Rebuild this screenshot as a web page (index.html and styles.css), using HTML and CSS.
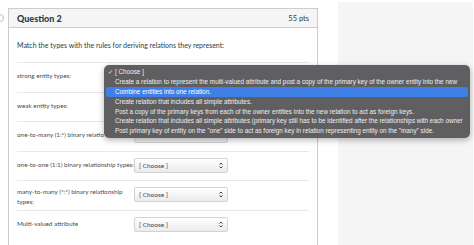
FILE: index.html
```html
<!DOCTYPE html>
<html lang="en">
<head>
    <meta charset="UTF-8">
    <meta name="viewport" content="width=device-width, initial-scale=1.0">
    <title>Question 2</title>
    <link rel="stylesheet" href="styles.css">
</head>
<body>
    <div class="page">
        <div class="gutter">
            <span class="marker"></span>
        </div>

        <div class="question">
            <div class="question-header">
                <span class="question-title">Question 2</span>
                <span class="question-points">55 pts</span>
            </div>

            <div class="question-body">
                <p class="intro">Match the types with the rules for deriving relations they represent:</p>

                <!-- first three selects sit under the open menu -->
                <div class="match-row">
                    <div class="match-label">strong entity types:</div>
                    <div class="select-box"></div>
                </div>
                <div class="match-row">
                    <div class="match-label">weak entity types:</div>
                    <div class="select-box"></div>
                </div>
                <div class="match-row">
                    <div class="match-label clipped">one-to-many (1:*) binary relationship types:</div>
                    <div class="select-box"></div>
                </div>
                <div class="match-row">
                    <div class="match-label">one-to-one (1:1) binary relationship types:</div>
                    <div class="select-box">[ Choose ]
                        <svg class="arrows" width="4" height="7" viewBox="0 0 4 7"><path d="M0.5 2.6 L2 1 L3.5 2.6 M0.5 4.4 L2 6 L3.5 4.4" fill="none" stroke="#333" stroke-width="0.9"/></svg>
                    </div>
                </div>
                <div class="match-row">
                    <div class="match-label wrap">many-to-many (*:*) binary relationship types:</div>
                    <div class="select-box">[ Choose ]
                        <svg class="arrows" width="4" height="7" viewBox="0 0 4 7"><path d="M0.5 2.6 L2 1 L3.5 2.6 M0.5 4.4 L2 6 L3.5 4.4" fill="none" stroke="#333" stroke-width="0.9"/></svg>
                    </div>
                </div>
                <div class="match-row last">
                    <div class="match-label">Multi-valued attribute</div>
                    <div class="select-box">[ Choose ]
                        <svg class="arrows" width="4" height="7" viewBox="0 0 4 7"><path d="M0.5 2.6 L2 1 L3.5 2.6 M0.5 4.4 L2 6 L3.5 4.4" fill="none" stroke="#333" stroke-width="0.9"/></svg>
                    </div>
                </div>
            </div>
        </div>

        <div class="sidebar"></div>
    </div>

    <!-- open native select menu -->
    <ul class="select-menu">
        <li class="checked"><span class="check">&#10003;</span>[ Choose ]</li>
        <li>Create a relation to represent the multi-valued attribute and post a copy of the primary key of the owner entity into the new</li>
        <li class="active">Combine entities into one relation.</li>
        <li>Create relation that includes all simple attributes.</li>
        <li>Post a copy of the primary keys from each of the owner entities into the new relation to act as foreign keys.</li>
        <li>Create relation that includes all simple attributes (primary key still has to be identified after the relationships with each owner</li>
        <li>Post primary key of entity on the "one" side to act as foreign key in relation representing entity on the "many" side.</li>
    </ul>
</body>
</html>
```

FILE: styles.css
```css
:root {
    --text-main: #2d3b45;
    --text-dim: #4a4a4a;
    --border: #c7cdd1;
    --line: #e6e8ea;
    --panel: #f5f5f5;
}

body {
    margin: 0;
    background: #ffffff;
    color: var(--text-main);
    font-family: 'Lato', sans-serif;
    overflow: hidden;
}

.page {
    display: flex;
    height: 245px;
}

.gutter {
    width: 8px;
    flex: none;
}

.marker {
    display: block;
    width: 6px;
    height: 6px;
    margin: 14px 0 0 -4px;
    border: 1px solid #c0c0c0;
    border-radius: 50%;
}

.question {
    width: 308px;
    flex: none;
    margin-top: 8px;
    border: 1px solid var(--border);
    border-bottom: none;
}

.question-header {
    display: flex;
    justify-content: space-between;
    align-items: center;
    height: 18px;
    padding: 0 8px;
    background: var(--panel);
    border-bottom: 1px solid var(--border);
}

.question-title {
    font-size: 9px;
    font-weight: 900;
}

.question-points {
    font-size: 7.5px;
}

.question-body {
    padding: 0 8px;
}

.intro {
    margin: 0;
    height: 34px;
    line-height: 34px;
    font-size: 7px;
    border-bottom: 1px solid var(--line);
}

.match-row {
    display: flex;
    height: 29.5px;
    padding-top: 6px;
    box-sizing: border-box;
    border-bottom: 1px solid var(--line);
}

.match-row.last {
    border-bottom: none;
}

.match-label {
    width: 117px;
    flex: none;
    padding-top: 2px;
    font-size: 6.35px;
    line-height: 10px;
    color: var(--text-dim);
    white-space: nowrap;
}

.match-label.clipped {
    width: 87px;
    margin-right: 30px;
    overflow: hidden;
}

.match-label.wrap {
    white-space: normal;
    padding: 0 4px 0 0;
    box-sizing: border-box;
}

.select-box {
    display: flex;
    align-items: center;
    justify-content: space-between;
    width: 94px;
    height: 15px;
    box-sizing: border-box;
    padding: 0 4px;
    font-size: 6.5px;
    color: #444444;
    background: linear-gradient(#ffffff, #ebebeb);
    border: 1px solid #d4d4d4;
    border-radius: 2px;
}

.sidebar {
    width: 135px;
    flex: none;
    margin: 2px 0 0 20px;
    background: var(--panel);
}

.select-menu {
    position: absolute;
    left: 104px;
    top: 65px;
    width: 366px;
    margin: 0;
    padding: 2px 2px;
    box-sizing: border-box;
    list-style: none;
    background: rgba(90, 90, 92, 0.97);
    border-radius: 5px;
    box-shadow: 0 2px 6px rgba(0, 0, 0, 0.3);
    font-family: 'Liberation Sans', sans-serif;
    font-size: 6.35px;
    color: #eeeeee;
}

.select-menu li {
    height: 9.9px;
    line-height: 9.9px;
    padding-left: 9px;
    white-space: nowrap;
    overflow: hidden;
    border-radius: 2px;
}

.select-menu li.checked {
    padding-left: 2px;
}

.check {
    display: inline-block;
    width: 7px;
}

.select-menu li.active {
    background: #3e80e6;
    color: #ffffff;
}
```
